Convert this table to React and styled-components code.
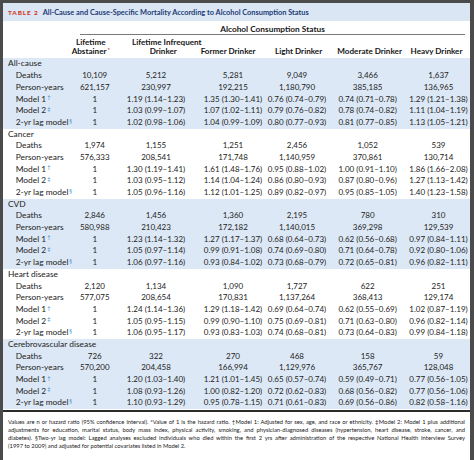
import React from 'react'
import styled, { createGlobalStyle, css } from 'styled-components'

const GlobalStyle = createGlobalStyle`
  html, body {
    margin: 0;
    padding: 0;
    background: #ffffff;
  }
  body {
    font-family: Lato, "Liberation Sans", sans-serif;
    color: #232323;
  }
`

// six data columns, centred under their headings; the padding nudges each centre
const columns = css`
  display: grid;
  grid-template-columns: 61px 61.5px 69px 70.5px 67.25px 70.75px 67px;
  & > :nth-child(3) { padding-right: 8px; }
  & > :nth-child(4) { padding-left: 6.5px; }
  & > :nth-child(5) { padding-right: 3.2px; }
  & > :nth-child(7) { padding-left: 4px; }
`

const Frame = styled.div`
  width: 474px;
  height: 460px;
  box-sizing: border-box;
  border: 3px solid #4b4b4b;
  border-right-width: 4px;
  border-bottom: none;
  background: #ffffff;
  overflow: hidden;
`

const TitleBar = styled.div`
  height: 18px;
  background: #dae6f3;
  display: flex;
  align-items: center;
  gap: 4px;
  padding-left: 5px;
  white-space: nowrap;
`

const Tag = styled.span`
  color: #d3372b;
  font-size: 6.4px;
  font-weight: 900;
  letter-spacing: 0.9px;
`

const Title = styled.span`
  color: #1d3b76;
  font-size: 7.4px;
  font-weight: 700;
`

const Head = styled.div`
  ${columns}
  padding-bottom: 2.2px;
`

const Spanner = styled.div`
  grid-column: 2 / 8;
  margin: 0 5px 3.3px 16px;
  padding: 4px 0 0 !important;
  line-height: 9px;
  height: 9px;
  border-bottom: 1.5px solid #7a7a7a;
  text-align: center;
  font-size: 8.3px;
  font-weight: 700;
  color: #161616;
`

const ColHead = styled.div`
  align-self: end;
  text-align: center;
  font-size: 8.1px;
  font-weight: 700;
  line-height: 9px;
  color: #161616;
  white-space: nowrap;
`

const Group = styled.div`
  background: ${p => (p.$shade ? '#dce8f5' : '#ffffff')};
`

const GroupName = styled.div`
  height: 11.7px;
  line-height: 11.7px;
  padding-left: 5px;
  font-size: 8.4px;
`

const Row = styled.div`
  ${columns}
  height: 11.7px;
  line-height: 11.7px;
  font-size: 8px;
`

const Label = styled.div`
  padding-left: 12.7px;
  font-size: 8.4px;
  white-space: nowrap;
`

const Cell = styled.div`
  text-align: center;
  white-space: nowrap;
`

const Mark = styled.span`
  color: ${p => p.$color || '#3d8ed6'};
  font-size: 5.6px;
  vertical-align: 2.4px;
  line-height: 0;
  margin-left: 1px;
`

const Notes = styled.div`
  margin-top: 1px;
  border-top: 2px solid #2c2c2c;
  padding: 6px 5px 0 5px;
  font-size: 5.8px;
  line-height: 8.1px;
  color: #1a1a1a;
`

const NoteLine = styled.div`
  white-space: nowrap;
  text-align: justify;
  text-align-last: ${p => (p.$last ? 'left' : 'justify')};
`

const groups = [
  {
    name: 'All-cause',
    shade: true,
    rows: [
      ['10,109', '5,212', '5,281', '9,049', '3,466', '1,637'],
      ['621,157', '230,997', '192,215', '1,180,790', '385,185', '136,965'],
      ['1', '1.19 (1.14–1.23)', '1.35 (1.30–1.41)', '0.76 (0.74–0.79)', '0.74 (0.71–0.78)', '1.29 (1.21–1.38)'],
      ['1', '1.03 (0.99–1.07)', '1.07 (1.02–1.11)', '0.79 (0.76–0.82)', '0.78 (0.74–0.82)', '1.11 (1.04–1.19)'],
      ['1', '1.02 (0.98–1.06)', '1.04 (0.99–1.09)', '0.80 (0.77–0.93)', '0.81 (0.77–0.85)', '1.13 (1.05–1.21)'],
    ],
  },
  {
    name: 'Cancer',
    shade: false,
    rows: [
      ['1,974', '1,155', '1,251', '2,456', '1,052', '539'],
      ['576,333', '208,541', '171,748', '1,140,959', '370,861', '130,714'],
      ['1', '1.30 (1.19–1.41)', '1.61 (1.48–1.76)', '0.95 (0.88–1.02)', '1.00 (0.91–1.10)', '1.86 (1.66–2.08)'],
      ['1', '1.03 (0.95–1.12)', '1.14 (1.04–1.24)', '0.86 (0.80–0.93)', '0.87 (0.80–0.96)', '1.27 (1.13–1.42)'],
      ['1', '1.05 (0.96–1.16)', '1.12 (1.01–1.25)', '0.89 (0.82–0.97)', '0.95 (0.85–1.05)', '1.40 (1.23–1.58)'],
    ],
  },
  {
    name: 'CVD',
    shade: true,
    rows: [
      ['2,846', '1,456', '1,360', '2,195', '780', '310'],
      ['580,988', '210,423', '172,182', '1,140,015', '369,298', '129,539'],
      ['1', '1.23 (1.14–1.32)', '1.27 (1.17–1.37)', '0.68 (0.64–0.73)', '0.62 (0.56–0.68)', '0.97 (0.84–1.11)'],
      ['1', '1.05 (0.97–1.14)', '0.99 (0.91–1.08)', '0.74 (0.69–0.80)', '0.71 (0.64–0.78)', '0.92 (0.80–1.06)'],
      ['1', '1.06 (0.97–1.16)', '0.93 (0.84–1.02)', '0.73 (0.68–0.79)', '0.72 (0.65–0.81)', '0.96 (0.82–1.11)'],
    ],
  },
  {
    name: 'Heart disease',
    shade: false,
    rows: [
      ['2,120', '1,134', '1,090', '1,727', '622', '251'],
      ['577,075', '208,654', '170,831', '1,137,264', '368,413', '129,174'],
      ['1', '1.24 (1.14–1.36)', '1.29 (1.18–1.42)', '0.69 (0.64–0.74)', '0.62 (0.55–0.69)', '1.02 (0.87–1.19)'],
      ['1', '1.05 (0.95–1.15)', '0.99 (0.90–1.10)', '0.75 (0.69–0.81)', '0.71 (0.63–0.80)', '0.96 (0.82–1.14)'],
      ['1', '1.06 (0.95–1.17)', '0.93 (0.83–1.03)', '0.74 (0.68–0.81)', '0.73 (0.64–0.83)', '0.99 (0.84–1.18)'],
    ],
  },
  {
    name: 'Cerebrovascular disease',
    shade: true,
    rows: [
      ['726', '322', '270', '468', '158', '59'],
      ['570,200', '204,458', '166,994', '1,129,976', '365,767', '128,048'],
      ['1', '1.20 (1.03–1.40)', '1.21 (1.01–1.45)', '0.65 (0.57–0.74)', '0.59 (0.49–0.71)', '0.77 (0.56–1.05)'],
      ['1', '1.08 (0.93–1.26)', '1.00 (0.82–1.20)', '0.72 (0.62–0.83)', '0.68 (0.56–0.82)', '0.77 (0.56–1.06)'],
      ['1', '1.10 (0.93–1.29)', '0.95 (0.78–1.15)', '0.71 (0.61–0.83)', '0.69 (0.56–0.86)', '0.82 (0.58–1.16)'],
    ],
  },
]

const rowLabels = [
  ['Deaths', null],
  ['Person-years', null],
  ['Model 1', '†'],
  ['Model 2', '‡'],
  ['2-yr lag model', '§'],
]

// footnote set line by line, as in the printed table
const notes = [
  'Values are n or hazard ratio (95% confidence interval). *Value of 1 is the hazard ratio. †Model 1: Adjusted for sex, age, and race or ethnicity. ‡Model 2: Model 1 plus additional',
  'adjustments for education, marital status, body mass index, physical activity, smoking, and physician-diagnosed diseases (hypertension, heart disease, stroke, cancer, and',
  'diabetes). §Two-yr lag model: Lagged analyses excluded individuals who died within the first 2 yrs after administration of the respective National Health Interview Survey',
  '(1997 to 2009) and adjusted for potential covariates listed in Model 2.',
]

export default function App() {
  return (
    <>
      <GlobalStyle />
      <Frame>
        <TitleBar>
          <Tag>TABLE 2</Tag>
          <Title>All-Cause and Cause-Specific Mortality According to Alcohol Consumption Status</Title>
        </TitleBar>

        <Head>
          <Spanner>Alcohol Consumption Status</Spanner>
          <ColHead />
          <ColHead>Lifetime<br />Abstainer<Mark $color="#c0392b">*</Mark></ColHead>
          <ColHead>Lifetime Infrequent<br />Drinker</ColHead>
          <ColHead>Former Drinker</ColHead>
          <ColHead>Light Drinker</ColHead>
          <ColHead>Moderate Drinker</ColHead>
          <ColHead>Heavy Drinker</ColHead>
        </Head>

        {groups.map(g => (
          <Group key={g.name} $shade={g.shade}>
            <GroupName>{g.name}</GroupName>
            {g.rows.map((vals, i) => (
              <Row key={i}>
                <Label>
                  {rowLabels[i][0]}
                  {rowLabels[i][1] && <Mark>{rowLabels[i][1]}</Mark>}
                </Label>
                {vals.map((v, j) => <Cell key={j}>{v}</Cell>)}
              </Row>
            ))}
          </Group>
        ))}

        <Notes>
          {notes.map((line, i) => (
            <NoteLine key={i} $last={i === notes.length - 1}>{line}</NoteLine>
          ))}
        </Notes>
      </Frame>
    </>
  )
}
